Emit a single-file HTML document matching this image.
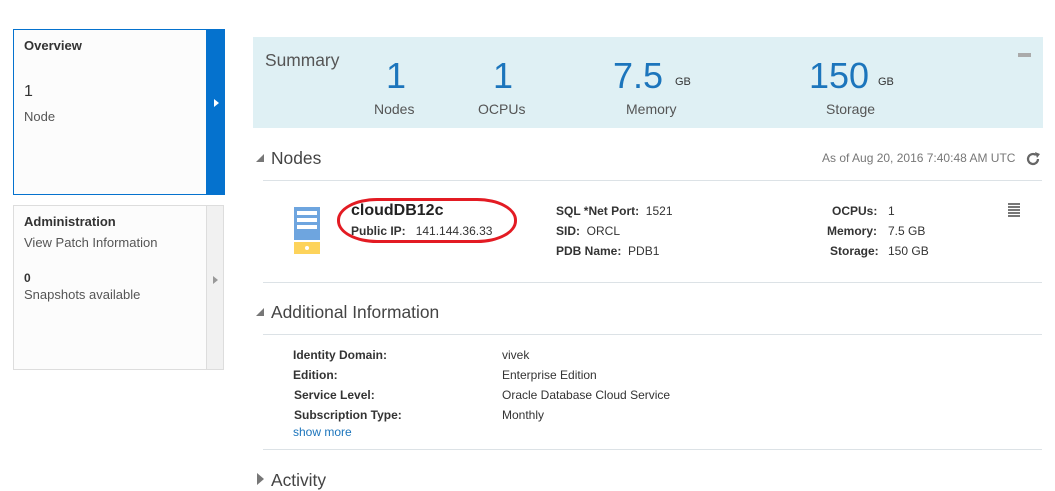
<!DOCTYPE html>
<html><head><meta charset="utf-8"><style>
*{margin:0;padding:0;box-sizing:border-box}
body{width:1055px;height:486px;background:#fff;font-family:"Liberation Sans",Arial,sans-serif;color:#333;position:relative;overflow:hidden}
.a{position:absolute;white-space:nowrap}
.b{font-weight:bold}
.s12{font-size:12px}
.h{font-size:17.4px;color:#444}
</style></head><body>
<div class="a" style="left:13px;top:29px;width:212px;height:166px;border:1px solid #0572ce;background:#fcfcfc"></div>
<div class="a" style="left:206px;top:29px;width:19px;height:166px;background:#0572ce"></div>
<div class="a" style="left:214px;top:99px;width:0;height:0;border-left:5px solid #fff;border-top:4px solid transparent;border-bottom:4px solid transparent"></div>
<div class="a b" style="left:24px;top:38px;font-size:13px">Overview</div>
<div class="a" style="left:24px;top:83px;font-size:16px">1</div>
<div class="a" style="left:24px;top:109px;font-size:13px;color:#555">Node</div>
<div class="a" style="left:13px;top:205px;width:211px;height:165px;border:1px solid #ddd;background:#fcfcfc"></div>
<div class="a" style="left:206px;top:206px;width:17px;height:163px;background:#f1f1f1;border-left:1px solid #ddd"></div>
<div class="a" style="left:213px;top:276px;width:0;height:0;border-left:5px solid #999;border-top:4px solid transparent;border-bottom:4px solid transparent"></div>
<div class="a b" style="left:24px;top:214px;font-size:13px">Administration</div>
<div class="a" style="left:24px;top:235px;font-size:13px;color:#555">View Patch Information</div>
<div class="a b" style="left:24px;top:271px;font-size:12px">0</div>
<div class="a" style="left:24px;top:287px;font-size:13px;color:#555">Snapshots available</div>
<div class="a" style="left:253px;top:37px;width:790px;height:91px;background:#dff0f4"></div>
<div class="a h" style="left:265px;top:50px;color:#555">Summary</div>
<div class="a" style="left:386px;top:55px;font-size:36px;color:#1c75bc">1</div>
<div class="a" style="left:374px;top:101px;font-size:14px;color:#555">Nodes</div>
<div class="a" style="left:493px;top:55px;font-size:36px;color:#1c75bc">1</div>
<div class="a" style="left:478px;top:101px;font-size:14px;color:#555">OCPUs</div>
<div class="a" style="left:613px;top:55px;font-size:36px;color:#1c75bc">7.5</div>
<div class="a" style="left:675px;top:76px;font-size:11px;color:#333">GB</div>
<div class="a" style="left:626px;top:101px;font-size:14px;color:#555">Memory</div>
<div class="a" style="left:809px;top:55px;font-size:36px;color:#1c75bc">150</div>
<div class="a" style="left:878px;top:76px;font-size:11px;color:#333">GB</div>
<div class="a" style="left:826px;top:101px;font-size:14px;color:#555">Storage</div>
<div class="a" style="left:1018px;top:53px;width:13px;height:4px;background:#aaa"></div>
<div class="a" style="left:256px;top:154px;width:0;height:0;border-right:8px solid #777;border-top:8px solid transparent"></div>
<div class="a h" style="left:271px;top:148px">Nodes</div>
<div class="a" style="left:822px;top:151px;font-size:12px;color:#777">As of Aug 20, 2016 7:40:48 AM UTC</div>
<svg class="a" style="left:1026px;top:152px" width="16" height="14" viewBox="0 0 16 14"><path d="M12 7a5 5 0 1 1-2-4" fill="none" stroke="#666" stroke-width="2.2"/><path d="M9 0l5 2-3 4z" fill="#666"/></svg>
<div class="a" style="left:263px;top:180px;width:779px;height:1px;background:#dce2e6"></div>
<div class="a" style="left:294px;top:207px;width:26px;height:33px;background:#6ea5df"></div>
<div class="a" style="left:297px;top:211px;width:20px;height:4px;background:#fff"></div>
<div class="a" style="left:297px;top:218px;width:20px;height:4px;background:#fff"></div>
<div class="a" style="left:297px;top:225px;width:20px;height:4px;background:#fff"></div>
<div class="a" style="left:294px;top:242px;width:26px;height:12px;background:#fdd35b"></div>
<div class="a" style="left:305px;top:246px;width:4px;height:4px;background:#fff;border-radius:2px"></div>
<div class="a" style="left:337px;top:198px;width:180px;height:45px;border:3px solid #e31b23;border-radius:40px/22px"></div>
<div class="a b" style="left:351px;top:202px;font-size:16px;color:#222">cloudDB12c</div>
<div class="a s12" style="left:351px;top:224px"><span class="b">Public IP:</span>&nbsp;&nbsp; 141.144.36.33</div>
<div class="a s12" style="left:556px;top:204px"><span class="b">SQL *Net Port:</span>&nbsp;&nbsp;1521</div>
<div class="a s12" style="left:556px;top:224px"><span class="b">SID:</span>&nbsp;&nbsp;ORCL</div>
<div class="a s12" style="left:556px;top:244px"><span class="b">PDB Name:</span>&nbsp;&nbsp;PDB1</div>
<div class="a s12 b" style="left:832px;top:204px">OCPUs:</div><div class="a s12" style="left:888px;top:204px">1</div>
<div class="a s12 b" style="left:827px;top:224px">Memory:</div><div class="a s12" style="left:888px;top:224px">7.5 GB</div>
<div class="a s12 b" style="left:830px;top:244px">Storage:</div><div class="a s12" style="left:888px;top:244px">150 GB</div>
<div class="a" style="left:1008px;top:203px;width:12px;height:14px;background:repeating-linear-gradient(#777 0 2px,transparent 2px 3px)"></div>
<div class="a" style="left:263px;top:282px;width:779px;height:1px;background:#dce2e6"></div>
<div class="a" style="left:256px;top:308px;width:0;height:0;border-right:8px solid #777;border-top:8px solid transparent"></div>
<div class="a h" style="left:271px;top:302px">Additional Information</div>
<div class="a" style="left:263px;top:334px;width:779px;height:1px;background:#dce2e6"></div>
<div class="a s12 b" style="left:293px;top:348px">Identity Domain:</div><div class="a s12" style="left:502px;top:348px">vivek</div>
<div class="a s12 b" style="left:293px;top:368px">Edition:</div><div class="a s12" style="left:502px;top:368px">Enterprise Edition</div>
<div class="a s12 b" style="left:294px;top:388px">Service Level:</div><div class="a s12" style="left:502px;top:388px">Oracle Database Cloud Service</div>
<div class="a s12 b" style="left:294px;top:408px">Subscription Type:</div><div class="a s12" style="left:502px;top:408px">Monthly</div>
<div class="a s12" style="left:293px;top:425px;color:#1c75bc">show more</div>
<div class="a" style="left:263px;top:449px;width:779px;height:1px;background:#dce2e6"></div>
<div class="a" style="left:257px;top:473px;width:0;height:0;border-left:7px solid #777;border-top:6px solid transparent;border-bottom:6px solid transparent"></div>
<div class="a h" style="left:271px;top:470px">Activity</div>
</body></html>
